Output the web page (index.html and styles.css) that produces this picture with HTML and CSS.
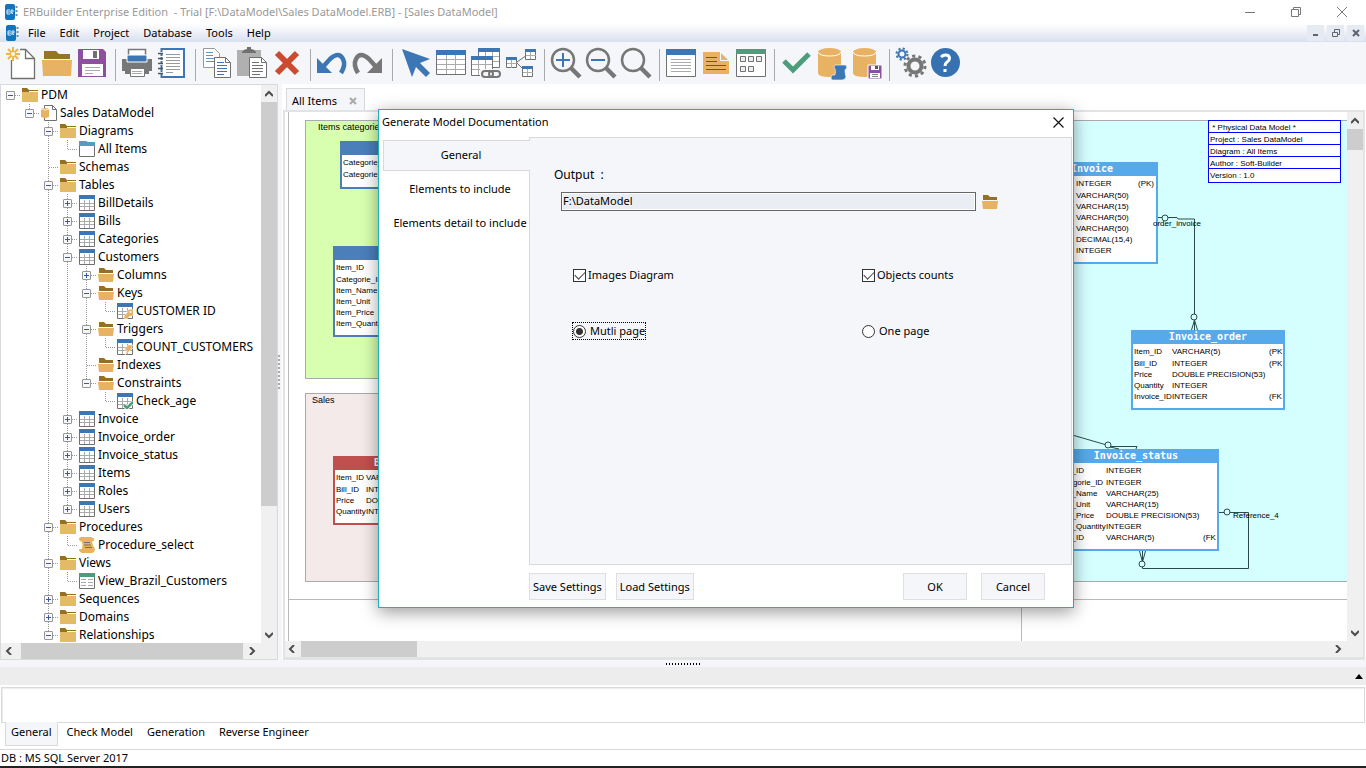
FILE: index.html
```html
<!DOCTYPE html>
<html lang="en">
<head>
<meta charset="utf-8">
<title>ERBuilder Enterprise Edition</title>
<link rel="stylesheet" href="styles.css">
</head>
<body>
<svg class="defs" aria-hidden="true">
  <symbol id="logo" viewBox="0 0 14 16"><rect x="1" y="0" width="10" height="16" rx="2" fill="#1274bc"/><path d="M3 6h3M3 8h3M3 10h3M3 6v4M7 6v4M7 6h2v2H7l2 2" stroke="#d8ecfa" fill="none"/><path d="M12.500 2v2m0 2v2m0 2v2" stroke="#5b93bd" stroke-width="2"/></symbol>
  <symbol id="folder" viewBox="0 0 16 14"><path d="M0 0h5l2 2h9v2H0z" fill="#957023"/><path d="M0 4h16v10H0z" fill="#e3ba66"/><path d="M7 3h9v1H7z" fill="#fff"/></symbol>
  <symbol id="openfolder" viewBox="0 0 16 14"><path d="M1 0h5l2 2h7v3H1z" fill="#957023"/><path d="M0 6h16l-1 8H1z" fill="#e8b264"/></symbol>
  <symbol id="grid" viewBox="0 0 16 16"><path d="M.5 4v11.500h15V4" fill="#fff" stroke="#707070"/><path d="M5.500 5v10M10.500 5v10M1 8.500h14M1 11.500h14" stroke="#aaa"/><path d="M0 0h16v4H0z" fill="#3d76b4"/></symbol>
  <symbol id="gridkey" viewBox="0 0 16 16"><use href="#grid"/><path d="M7 16v-3l3-3a4 3.500 0 1 1 3 3l-3 3z" fill="#e8b264" stroke="#fff" stroke-width=".5"/><circle cx="13.500" cy="9" r="1" fill="#fff"/></symbol>
  <symbol id="gridbolt" viewBox="0 0 16 16"><use href="#grid"/><path d="M11 6h5l-2 3h2l-8 7 2-5H7z" fill="#e8b264" stroke="#fff" stroke-width=".5"/></symbol>
  <symbol id="gridcheck" viewBox="0 0 16 16"><use href="#grid"/><path d="m7 12 3 3 6-6" fill="none" stroke="#fff" stroke-width="4"/><path d="m7 12 3 3 6-6" fill="none" stroke="#4b9d7c" stroke-width="2.500"/></symbol>
  <symbol id="model" viewBox="0 0 16 16"><path d="M3.500.5h8l4 4v11h-12z" fill="#fff" stroke="#707070"/><path d="M11.500.5v4h4" fill="none" stroke="#707070"/><path d="M0 4q4-2 8 0v8q-4 2-8 0z" fill="#e8b264"/><path d="M0 4q4 2 8 0" fill="none" stroke="#fff" stroke-width=".7"/></symbol>
  <symbol id="diagram" viewBox="0 0 16 16"><path d="M.5 3.500h15v12H.5z" fill="#fff" stroke="#707070"/><path d="M0 0h7l2 1h7v4H0z" fill="#4d9fc4"/></symbol>
  <symbol id="script" viewBox="0 0 16 16"><path d="M2 0h10q4 1 3 4h-2q0 4 3 8 0 4-4 4H3q-3-1-3-4h3Q4 8 3 5L0 3q0-3 2-3z" fill="#e8b264"/><path d="M5 5.500h6M5 8h7M6 10.500h7" stroke="#707070"/></symbol>
  <symbol id="view" viewBox="0 0 16 16"><path d="M.5 4v11.500h15V4" fill="#fff" stroke="#707070"/><path d="M2 6.500h5m2 0h5M2 9.500h5m2 0h5M2 12.500h5m2 0h5" stroke="#aaa"/><path d="M0 0h16v4H0z" fill="#4b9d7c"/></symbol>
  <symbol id="chev" viewBox="0 0 8 8"><path d="M6 0 2 4l4 4" fill="none" stroke="#4d4d4d" stroke-width="2"/></symbol>
</svg>

<header class="titlebar">
  <svg class="logo"><use href="#logo"/></svg>
  <h1>ERBuilder Enterprise Edition &nbsp;- Trial [F:\DataModel\Sales DataModel.ERB] - [Sales DataModel]</h1>
  <div class="winctl">
    <button aria-label="Minimize"><svg width="10" height="10"><path d="M0 5.500h10" stroke="#777"/></svg></button>
    <button aria-label="Restore"><svg width="10" height="10"><path d="M.5 2.500h7v7h-7zM2.500 2.500v-2h7v7h-2" fill="none" stroke="#777"/></svg></button>
    <button aria-label="Close"><svg width="10" height="10"><path d="m0 0 10 10M10 0 0 10" stroke="#777"/></svg></button>
  </div>
</header>

<nav class="menubar">
  <svg class="logo"><use href="#logo"/></svg>
  <button>File</button><button>Edit</button><button>Project</button><button>Database</button><button>Tools</button><button>Help</button>
  <div class="mdictl">
    <button aria-label="Minimize diagram"><svg width="8" height="8"><path d="M1 6h5" stroke="#5f6570" stroke-width="2"/></svg></button>
    <button aria-label="Restore diagram"><svg width="8" height="8"><path d="M.5 3.500h5v4h-5zM2.500 3V.500h5v5H6" fill="none" stroke="#5f6570"/></svg></button>
    <button aria-label="Close diagram"><svg width="8" height="8"><path d="m1 1 6 6M7 1 1 7" stroke="#5f6570" stroke-width="2"/></svg></button>
  </div>
</nav>

<div class="toolbar" role="toolbar">
  <div class="group">
    <button aria-label="New"><svg viewBox="4 46 35 34"><path d="M11.500 49.500h14l9 9v20h-23z" fill="#fff" stroke="#707070" stroke-width="1.300"/><path d="M25.500 49.500v9h9" fill="none" stroke="#707070" stroke-width="1.300"/><path d="M6 47h14v13H6z" fill="#f4f6f9"/><path d="M13 47v14M6 54h14M8 49l10 10M18 49 8 59" stroke="#f0b544" stroke-width="2"/><circle cx="13" cy="54" r="2" fill="#f4f6f9"/></svg></button>
    <button aria-label="Open"><svg viewBox="39 46 35 34"><path d="M44 51h12l3 3h11v5H44z" fill="#957529"/><path d="M42 60h30l-1 16H43z" fill="#e8b264"/></svg></button>
    <button aria-label="Save"><svg viewBox="74 46 35 34"><path d="M78 49h25l3 3v25H78z" fill="#8c509f"/><path d="M83 50h16v9H83zM82 64h21v12H82z" fill="#fff"/><path d="M93 51h4v7h-4z" fill="#707070"/><path d="M85 67.500h15M85 70.500h15M85 73.500h8" stroke="#aaa"/></svg></button>
  </div>
  <div class="group">
    <button aria-label="Print"><svg viewBox="120 46 35 34"><path d="M122 59h30v12h-3v3h-24v-3h-3z" fill="#777"/><path d="M128.500 49.500h17v8h-17z" fill="#fff" stroke="#777" stroke-width="1.500"/><path d="M127 55h20v7h-20z" fill="#3d76b4" stroke="#fff"/><path d="M130.500 68.500h14v8h-14z" fill="#fff" stroke="#777"/><path d="M132 71.500h10M132 73.500h10" stroke="#aaa"/></svg></button>
    <button aria-label="Documentation"><svg viewBox="155 46 35 34"><rect x="161.500" y="49" width="22.500" height="28" fill="#fff" stroke="#3d76b4" stroke-width="2"/><path d="M161 52v24" stroke="#fff" stroke-width="4" stroke-dasharray="1 3"/><path d="M158 53.500h5m-5 5h5m-5 5h5m-5 5h5m-5 5h5" stroke="#555" stroke-width="1.500"/><path d="M166 54.500h14m-14 3h14m-14 3h14m-14 3h14m-14 3h14m-14 3h14m-14 3h7" stroke="#999"/></svg></button>
  </div>
  <div class="group">
    <button aria-label="Copy"><svg viewBox="200 46 35 34"><path d="M203.500 48.500h11l5 5v14h-16z" fill="#fff" stroke="#999"/><path d="M206 52.500h7m-7 3h7m-7 3h10m-10 3h10" stroke="#5b93cb"/><path d="M214.500 57.500h11l5 5v15h-16z" fill="#fff" stroke="#707070"/><path d="M225.500 57.500v5h5" fill="none" stroke="#707070"/><path d="M217 62.500h7m-7 3h10m-10 3h10m-10 3h10m-10 3h7" stroke="#3d76b4"/></svg></button>
    <button aria-label="Paste"><svg viewBox="235 46 35 34"><path d="M237 50h24v26h-24z" fill="#b0b0b0"/><path d="M242 52q2-3 5-3v-2h4v2q3 0 5 3v1h-14z" fill="#707070"/><path d="M249.500 57.500h12l5 5v15h-17z" fill="#fff" stroke="#707070"/><path d="M261.500 57.500v5h5" fill="none" stroke="#707070"/><path d="M252 62.500h7m-7 3h11m-11 3h11m-11 3h11m-11 3h8" stroke="#707070"/></svg></button>
    <button aria-label="Delete"><svg viewBox="270 46 35 34"><path d="m277 53 20 20M297 53l-20 20" stroke="#cc4a30" stroke-width="6"/></svg></button>
  </div>
  <div class="group group-wide">
    <button aria-label="Undo"><svg viewBox="315 46 35 34"><path d="M321 69 330 59q9-8 13 0 3 6-2 14" fill="none" stroke="#3d76b4" stroke-width="4.500"/><path d="M317 58v15h15z" fill="#3d76b4"/></svg></button>
    <button aria-label="Redo"><svg viewBox="350 46 35 34"><path d="M378 69 369 59q-9-8-13 0-3 6 2 14" fill="none" stroke="#777" stroke-width="4.500"/><path d="M382 58v15h-15z" fill="#777"/></svg></button>
  </div>
  <div class="group">
    <button aria-label="Select"><svg viewBox="399 46 35 34"><path d="m402 49 28 10-10 4 10 10-4 4-10-10-4 10z" fill="#3d76b4"/></svg></button>
    <button aria-label="Table"><svg viewBox="434 46 35 34"><path d="M436.500 51.500h29v23h-29z" fill="#fff" stroke="#707070"/><path d="M446.500 55v19m9-19v19M437 59.500h28m-28 5h28m-28 5h28" stroke="#aaa"/><path d="M436 50h30v5h-30z" fill="#3d76b4"/></svg></button>
    <button aria-label="Linked tables"><svg viewBox="469 46 35 34"><path d="M478.500 49.500h21v18h-21z" fill="#fff" stroke="#707070"/><path d="M485.500 52v15m7-15v15M479 56.500h20m-20 5h20" stroke="#aaa"/><path d="M478 48h22v4h-22z" fill="#3d76b4"/><path d="M471.500 57.500h21v18h-21z" fill="#fff" stroke="#707070"/><path d="M478.500 60v15m7-15v15M472 64.500h20m-20 5h20" stroke="#aaa"/><path d="M471 56h22v4h-22z" fill="#3d76b4"/><path d="M480 69h22v10h-22z" fill="#f4f6f9"/><rect x="482" y="71" width="11" height="6" rx="3" fill="none" stroke="#777" stroke-width="2"/><rect x="489" y="71" width="11" height="6" rx="3" fill="none" stroke="#777" stroke-width="2"/></svg></button>
    <button aria-label="Relationship"><svg viewBox="504 46 35 34"><path d="m517 62 10-7M517 63l6 6" stroke="#707070"/><g fill="#fff" stroke="#707070"><path d="M506.500 58.500h10v9h-10zM525.500 50.500h10v9h-10zM522.500 67.500h10v9h-10z"/></g><path d="M511.500 60v8M507 63.500h10M530.500 51v8M526 55.500h10M527.500 68v8M523 72.500h10" stroke="#aaa"/><path d="M506 57h11v3h-11zM525 49h11v3h-11zM522 66h11v3h-11z" fill="#3d76b4"/></svg></button>
  </div>
  <div class="group">
    <button aria-label="Zoom in"><svg viewBox="549 46 35 34"><path d="m571 68 9 9" stroke="#777" stroke-width="4.500"/><circle cx="563" cy="60" r="11" fill="none" stroke="#777" stroke-width="2.500"/><path d="M556 60h14M563 53v14" stroke="#3d76b4" stroke-width="2"/></svg></button>
    <button aria-label="Zoom out"><svg viewBox="584 46 35 34"><path d="m606 68 9 9" stroke="#777" stroke-width="4.500"/><circle cx="598" cy="60" r="11" fill="none" stroke="#777" stroke-width="2.500"/><path d="M591 60h14" stroke="#3d76b4" stroke-width="2"/></svg></button>
    <button aria-label="Zoom"><svg viewBox="619 46 35 34"><path d="m641 68 9 9" stroke="#777" stroke-width="4.500"/><circle cx="633" cy="60" r="11" fill="none" stroke="#777" stroke-width="2.500"/></svg></button>
  </div>
  <div class="group">
    <button aria-label="Note"><svg viewBox="664 46 35 34"><path d="M666.500 50.500h29v26h-29z" fill="#fff" stroke="#707070"/><path d="M666 49h30v6h-30z" fill="#3d76b4"/><path d="M671 59.500h20m-20 3h20m-20 3h20m-20 3h20m-20 3h20" stroke="#aaa"/></svg></button>
    <button aria-label="Text"><svg viewBox="699 46 35 34"><path d="M703 52h17l9 9v13h-26z" fill="#e8b264"/><path d="M720.500 52v8.500h9" fill="none" stroke="#fff"/><path d="M706 57.500h11m-11 4h11m-11 4h20m-20 4h20" stroke="#5f5a50"/></svg></button>
    <button aria-label="Calendar"><svg viewBox="734 46 35 34"><path d="M736.500 50.500h29v26h-29z" fill="#fff" stroke="#707070"/><path d="M736 49h30v5h-30z" fill="#4b9d7c"/><path d="M740.500 56.500h5v5h-5zM748.500 56.500h5v5h-5zM756.500 56.500h5v5h-5zM740.500 66.500h5v5h-5zM748.500 66.500h5v5h-5z" fill="#eee" stroke="#707070"/></svg></button>
  </div>
  <div class="group">
    <button aria-label="Check model"><svg viewBox="779 46 35 34"><path d="m784 61 9 9 16-16" fill="none" stroke="#4b9d7c" stroke-width="5"/></svg></button>
    <button aria-label="Generate script"><svg viewBox="814 46 35 34"><path d="M818 51v22q0 4 12 4 11 0 11-4V51z" fill="#e8b264"/><ellipse cx="829.500" cy="52" rx="11.500" ry="4" fill="#e8b264"/><path d="M818 52q1 4 11.500 4T841 52" fill="none" stroke="#fff"/><path d="M835 65h11q2 3-1 5 0 4 1 7-1 3-4 3h-10q-2-2 0-5h3q1-4 0-6-2-2 0-4z" fill="#3d76b4" stroke="#fff" stroke-width=".6"/></svg></button>
    <button aria-label="Save database"><svg viewBox="849 46 35 34"><path d="M853 51v22q0 4 12 4 11 0 11-4V51z" fill="#e8b264"/><ellipse cx="864.500" cy="52" rx="11.500" ry="4" fill="#e8b264"/><path d="M853 52q1 4 11.500 4T876 52" fill="none" stroke="#fff"/><path d="M868 65h14v14h-14z" fill="#8c509f" stroke="#fff"/><path d="M871 66h8v4h-8zM870 73h10v5h-10z" fill="#fff"/><path d="M875 66h3v3h-3z" fill="#555"/><path d="M872 74.500h6m-6 2h6" stroke="#888"/></svg></button>
  </div>
  <div class="group">
    <button aria-label="Settings"><svg viewBox="894 46 35 34"><circle cx="902" cy="54" r="3.500" fill="none" stroke="#3d76b4" stroke-width="2"/><circle cx="902" cy="54" r="5.500" fill="none" stroke="#3d76b4" stroke-width="2" stroke-dasharray="2.160 2.160"/><circle cx="915" cy="66" r="6.500" fill="none" stroke="#777" stroke-width="4"/><circle cx="915" cy="66" r="10" fill="none" stroke="#777" stroke-width="3" stroke-dasharray="3.140 3.140"/></svg></button>
    <button aria-label="Help"><svg viewBox="929 46 35 34"><circle cx="945.500" cy="62.500" r="14.500" fill="#3672b2"/><path d="M941 57q2-2 4.500-2 4 0 4 3.500 0 2-2.500 3.500-2 1.500-2 4" fill="none" stroke="#fff" stroke-width="3"/><path d="M943.500 69h3v3h-3z" fill="#fff"/></svg></button>
  </div>
</div>

<main class="workspace">
  <aside class="explorer">
    <div class="explorer-main">
      <ul class="tree">
        <li><div class="row"><i class="exp"></i><svg><use href="#folder"/></svg>PDM</div><ul>
          <li><div class="row"><i class="exp"></i><svg><use href="#model"/></svg>Sales DataModel</div><ul>
            <li><div class="row"><i class="exp"></i><svg><use href="#folder"/></svg>Diagrams</div><ul>
              <li><div class="row"><svg><use href="#diagram"/></svg>All Items</div></li></ul></li>
            <li><div class="row"><svg><use href="#folder"/></svg>Schemas</div></li>
            <li><div class="row"><i class="exp"></i><svg><use href="#folder"/></svg>Tables</div><ul>
              <li><div class="row"><i class="exp plus"></i><svg><use href="#grid"/></svg>BillDetails</div></li>
              <li><div class="row"><i class="exp plus"></i><svg><use href="#grid"/></svg>Bills</div></li>
              <li><div class="row"><i class="exp plus"></i><svg><use href="#grid"/></svg>Categories</div></li>
              <li><div class="row"><i class="exp"></i><svg><use href="#grid"/></svg>Customers</div><ul>
                <li><div class="row"><i class="exp plus"></i><svg><use href="#openfolder"/></svg>Columns</div></li>
                <li><div class="row"><i class="exp"></i><svg><use href="#openfolder"/></svg>Keys</div><ul>
                  <li><div class="row"><svg><use href="#gridkey"/></svg>CUSTOMER ID</div></li></ul></li>
                <li><div class="row"><i class="exp"></i><svg><use href="#openfolder"/></svg>Triggers</div><ul>
                  <li><div class="row"><svg><use href="#gridbolt"/></svg>COUNT_CUSTOMERS</div></li></ul></li>
                <li><div class="row"><svg><use href="#openfolder"/></svg>Indexes</div></li>
                <li><div class="row"><i class="exp"></i><svg><use href="#openfolder"/></svg>Constraints</div><ul>
                  <li><div class="row"><svg><use href="#gridcheck"/></svg>Check_age</div></li></ul></li></ul></li>
              <li><div class="row"><i class="exp plus"></i><svg><use href="#grid"/></svg>Invoice</div></li>
              <li><div class="row"><i class="exp plus"></i><svg><use href="#grid"/></svg>Invoice_order</div></li>
              <li><div class="row"><i class="exp plus"></i><svg><use href="#grid"/></svg>Invoice_status</div></li>
              <li><div class="row"><i class="exp plus"></i><svg><use href="#grid"/></svg>Items</div></li>
              <li><div class="row"><i class="exp plus"></i><svg><use href="#grid"/></svg>Roles</div></li>
              <li><div class="row"><i class="exp plus"></i><svg><use href="#grid"/></svg>Users</div></li></ul></li>
            <li><div class="row"><i class="exp"></i><svg><use href="#folder"/></svg>Procedures</div><ul>
              <li><div class="row"><svg><use href="#script"/></svg>Procedure_select</div></li></ul></li>
            <li><div class="row"><i class="exp"></i><svg><use href="#folder"/></svg>Views</div><ul>
              <li><div class="row"><svg><use href="#view"/></svg>View_Brazil_Customers</div></li></ul></li>
            <li><div class="row"><i class="exp plus"></i><svg><use href="#folder"/></svg>Sequences</div></li>
            <li><div class="row"><i class="exp plus"></i><svg><use href="#folder"/></svg>Domains</div></li>
            <li><div class="row"><i class="exp"></i><svg><use href="#folder"/></svg>Relationships</div></li></ul></li></ul></li>
      </ul>
      <div class="vbar"><svg class="chev up"><use href="#chev"/></svg><div class="track"><div class="thumb tree-v"></div></div><svg class="chev down"><use href="#chev"/></svg></div>
    </div>
    <div class="hbar hbar-tree"><svg class="chev"><use href="#chev"/></svg><div class="track"><div class="thumb full"></div></div><svg class="chev right"><use href="#chev"/></svg></div>
  </aside>
  <div class="vsplit"><i></i></div>

  <section class="editor">
    <div class="doctabs"><div class="doctab"><button>All Items</button><button aria-label="Close tab"><svg width="8" height="8"><path d="m1 1 6 6M7 1 1 7" stroke="#aaa" stroke-width="2"/></svg></button></div></div>
    <div class="frame">
      <div class="frame-main">
        <div class="canvas">
          <div class="pageline pl-left"></div><div class="pageline pl-bottom"></div><div class="pageline pl-mid"></div>
          <div class="zone z-green"><span>Items categories</span></div>
          <div class="zone z-pink"><span>Sales</span></div>
          <div class="zone z-cyan"></div>

          <table class="node blue n-cat"><caption>Categories</caption><tbody><tr><td>Categorie_ID</td><td>INTEGER</td></tr><tr><td>Categorie_Name</td><td>VARCHAR(25)</td></tr></tbody></table>
          <table class="node blue pk n-items"><caption>Items</caption><tbody><tr><td>Item_ID</td><td>INTEGER</td></tr><tr><td>Categorie_ID</td><td>INTEGER</td></tr><tr><td>Item_Name</td><td>VARCHAR(25)</td></tr><tr><td>Item_Unit</td><td>VARCHAR(15)</td></tr><tr><td>Item_Price</td><td>DOUBLE</td></tr><tr><td>Item_Quantity</td><td>INTEGER</td></tr></tbody></table>
          <table class="node red pk n-bill"><caption>BillDetails</caption><tbody><tr><td>Item_ID</td><td>VARCHAR(5)</td></tr><tr><td>Bill_ID</td><td>INTEGER</td></tr><tr><td>Price</td><td>DOUBLE PRECISION</td></tr><tr><td>Quantity</td><td>INTEGER</td></tr></tbody></table>
          <table class="node sky pk n-inv"><caption>Invoice</caption><tbody><tr><td>Invoice_ID</td><td>INTEGER</td><td>(PK)</td></tr><tr><td>Name</td><td>VARCHAR(50)</td></tr><tr><td>Phone</td><td>VARCHAR(15)</td></tr><tr><td>Address</td><td>VARCHAR(50)</td></tr><tr><td>City</td><td>VARCHAR(50)</td></tr><tr><td>Total</td><td>DECIMAL(15,4)</td></tr><tr><td>Status</td><td>INTEGER</td></tr></tbody></table>
          <table class="node sky pk n-order"><caption>Invoice_order</caption><tbody><tr><td>Item_ID</td><td>VARCHAR(5)</td><td>(PK</td></tr><tr><td>Bill_ID</td><td>INTEGER</td><td>(PK</td></tr><tr><td>Price</td><td>DOUBLE PRECISION(53)</td></tr><tr><td>Quantity</td><td>INTEGER</td></tr><tr><td>Invoice_ID</td><td>INTEGER</td><td>(FK</td></tr></tbody></table>
          <table class="node sky pk n-status"><caption>Invoice_status</caption><tbody><tr><td>Item_ID</td><td>INTEGER</td><td></td></tr><tr><td>Categorie_ID</td><td>INTEGER</td></tr><tr><td>Item_Name</td><td>VARCHAR(25)</td></tr><tr><td>Item_Unit</td><td>VARCHAR(15)</td></tr><tr><td>Item_Price</td><td>DOUBLE PRECISION(53)</td></tr><tr><td>Item_Quantity</td><td>INTEGER</td></tr><tr><td>Item_ID</td><td>VARCHAR(5)</td><td>(FK</td></tr></tbody></table>

          <svg class="links" viewBox="285 112 1061 528">
            <g fill="none" stroke="#2b4a4c">
              <path d="M1158 217.500h19l1 1.500h16.500v111M1191.500 330l3-10 3 10M1194.500 320v10"/>
              <path d="M1074 435.500l31 9M1110 446.500h27M1137 446l-1 3M1110 447l9 2"/>
              <path d="M1219 512.500h29.500v56H1142.500v-17M1139.500 551l3 11 3-11"/>
              <path d="M1142.500 551v12"/>
            </g>
            <g fill="#d5ffff" stroke="#2b4a4c"><circle cx="1165" cy="218" r="3"/><circle cx="1194" cy="317" r="3"/><circle cx="1108" cy="445" r="3"/><circle cx="1227" cy="512" r="3"/><circle cx="1142" cy="564" r="3"/></g>
          </svg>
          <span class="rel r-inv">order_invoice</span>
          <span class="rel r-ref">Reference_4</span>
          <div class="legend"><div>&nbsp;* Physical Data Model *</div><div>Project : Sales DataModel</div><div>Diagram : All Items</div><div>Author : Soft-Builder</div><div>Version : 1.0</div></div>
        </div>
        <div class="vbar"><svg class="chev up"><use href="#chev"/></svg><div class="track"><div class="thumb doc-v"></div></div><svg class="chev down"><use href="#chev"/></svg></div>
      </div>
      <div class="hbar hbar-doc"><svg class="chev"><use href="#chev"/></svg><div class="track"><div class="thumb doc-h"></div></div><svg class="chev right"><use href="#chev"/></svg></div>
    </div>
  </section>
</main>

<div class="hsplit"><i></i></div>
<section class="output">
  <div class="output-head"><button aria-label="Expand"><svg width="8" height="5"><path d="M4 0l4 5H0z"/></svg></button></div>
  <div class="output-body"></div>
  <div class="output-tabs"><button class="active">General</button><button>Check Model</button><button>Generation</button><button>Reverse Engineer</button></div>
</section>
<footer class="status">DB : MS SQL Server 2017</footer>

<div class="dialog" role="dialog" aria-labelledby="dlg-title">
  <div class="dlg-head"><h2 id="dlg-title">Generate Model Documentation</h2><button aria-label="Close dialog"><svg width="11" height="11"><path d="m.5.5 10 10M10.500.5l-10 10" stroke="#111" stroke-width="1.200"/></svg></button></div>
  <div class="dlg-body">
    <div class="side"><button class="active">General</button><button>Elements to include</button><button>Elements detail to include</button></div>
    <form class="pane">
      <label class="outlabel" for="out">Output &nbsp;:</label>
      <div class="path"><input id="out" type="text" value="F:\DataModel"><button type="button" aria-label="Browse"><svg width="16" height="14"><use href="#openfolder"/></svg></button></div>
      <div class="options">
        <div><label><input type="checkbox" checked>Images Diagram</label></div>
        <div><label><input type="checkbox" checked>Objects counts</label></div>
        <div><label class="focus"><input type="radio" name="pages" checked>Mutli page</label></div>
        <div><label class="rlabel"><input type="radio" name="pages">One page</label></div>
      </div>
    </form>
  </div>
  <div class="dlg-foot"><button>Save Settings</button><button>Load Settings</button><span></span><button>OK</button><button>Cancel</button></div>
</div>
</body>
</html>
```
FILE: styles.css
```css
* { box-sizing: border-box; }
body {
  margin: 0;
  height: 100vh;
  display: flex;
  flex-direction: column;
  overflow: hidden;
  position: relative;
  background: #fff;
  color: #000;
  font: 11px/16px "Noto Sans", "Open Sans", sans-serif;
}
button { font: inherit; color: inherit; background: none; border: 0; padding: 0; margin: 0; display: flex; align-items: center; justify-content: center; }
h1, h2 { margin: 0; font: inherit; }
.defs { position: absolute; width: 0; height: 0; }
svg { display: block; flex: none; }

.titlebar { height: 24px; flex: none; display: flex; align-items: center; gap: 5px; padding-left: 4px; color: #999; }
.titlebar h1 { flex: 1; white-space: nowrap; }
.logo { width: 14px; height: 16px; }
.winctl { display: flex; margin-right: 1px; }
.winctl button { width: 46px; height: 20px; }

.menubar { height: 18px; flex: none; display: flex; align-items: center; gap: 14px; padding-left: 5px; background: linear-gradient(#fff, #d9dfef); }
.menubar .logo { margin-right: -5px; }
.mdictl { margin-left: auto; display: flex; gap: 3px; padding-right: 2px; }
.mdictl button { width: 17px; height: 16px; background: #e6eaf3; }

.toolbar { height: 42px; flex: none; display: flex; align-items: center; padding-left: 4px; background: #f4f6f9; }
.group { display: flex; position: relative; padding-right: 11px; }
.group + .group { padding-right: 10px; }
.group.group-wide { padding-right: 14px; }
.group:not(:last-child)::after { content: ""; position: absolute; right: 4px; top: 3px; height: 32px; border-right: 1px solid #aaa; }
.group.group-wide::after { right: 6px; }
.toolbar svg { width: 35px; height: 34px; }

.workspace { flex: 1; min-height: 0; display: flex; background: #f4f6f9; }
.explorer { width: 278px; flex: none; display: flex; flex-direction: column; background: #fff; border: 1px solid #d9d9db; }
.explorer-main { flex: 1; min-height: 0; display: flex; }
.tree { flex: 1; overflow: hidden; font-size: 12px; }
ul { list-style: none; margin: 0; padding: 0; }
.tree { padding-top: 1px; }
.tree ul { padding-left: 19px; }
.tree li { position: relative; }
.tree ul > li::before {
  content: ""; position: absolute; left: 9px; top: 0; bottom: 0; width: 1px;
  background: repeating-linear-gradient(#999 0 1px, transparent 1px 2px);
}
.tree ul > li:last-child::before { bottom: auto; height: 10px; }
.row { height: 18px; display: flex; align-items: center; padding-left: 21px; position: relative; white-space: nowrap; gap: 3px; }
.row::before {
  content: ""; position: absolute; left: 10px; top: 9px; width: 10px; height: 1px;
  background: repeating-linear-gradient(90deg, #999 0 1px, transparent 1px 2px);
}
.row svg { width: 16px; height: 16px; }
.exp { position: absolute; left: 5px; top: 5px; width: 9px; height: 9px; border: 1px solid #969696; border-radius: 1px; background: linear-gradient(#3c57a5, #3c57a5) center / 5px 1px no-repeat, #f8f8f8; }
.exp.plus { background: linear-gradient(#3c57a5, #3c57a5) center / 5px 1px no-repeat, linear-gradient(#3c57a5, #3c57a5) center / 1px 5px no-repeat, #f8f8f8; }

.vbar { width: 16px; flex: none; display: flex; flex-direction: column; align-items: center; background: #f0f0f0; padding: 5px 0 4px; }
.hbar { height: 16px; flex: none; display: flex; align-items: center; background: #f0f0f0; }
.track { flex: 1; align-self: stretch; }
.vbar .track { margin: 4px 0; }
.hbar .track { margin: 0 8px; }
.hbar-tree { padding: 0 21px 0 4px; }
.hbar-tree .track { margin-right: 5px; }
.hbar-doc { padding: 0 21px 0 3px; }
.hbar-doc .track { margin-left: 5px; }
.thumb { background: #cdcdcd; height: 100%; }
.thumb.tree-v { height: 77%; }
.thumb.doc-v { height: 21px; }
.thumb.doc-h { width: 116px; }
.chev { width: 8px; height: 8px; }
.up { transform: rotate(90deg); }
.down { transform: rotate(-90deg); }
.right { transform: rotate(180deg); }

.vsplit { width: 4px; flex: none; display: flex; align-items: center; }
.vsplit i { width: 2px; height: 34px; background: repeating-linear-gradient(#aaa 0 2px, transparent 2px 4px); }

.editor { flex: 1; min-width: 0; display: flex; flex-direction: column; background: #fff; }
.doctabs { height: 26px; flex: none; display: flex; padding: 4px 0 0 4px; }
.doctab { display: flex; align-items: center; gap: 12px; padding: 2px 7px 0 5px; background: #f4f6f9; border: 1px solid #d9d9db; border-bottom: 0; }
.frame { flex: 1; min-height: 0; display: flex; flex-direction: column; border: 2px solid #e2e3e5; border-width: 2px 2px 3px; margin: 0 1px; }
.frame-main { flex: 1; min-height: 0; display: flex; }
.canvas { flex: 1; position: relative; overflow: hidden; font: 8px/11px "Liberation Sans", Arial, sans-serif; }
.pageline { position: absolute; background: #b9b9b9; }
.pl-left { left: 3px; top: 0; bottom: 0; width: 1px; }
.pl-bottom { left: 3px; right: 0; top: 487px; height: 1px; }
.pl-mid { left: 736px; top: 487px; bottom: 0; width: 1px; }
.zone { position: absolute; border: 1px solid #aaa; padding: 1px 6px; font-size: 9px; }
.z-green { left: 20px; top: 8px; width: 400px; height: 259px; background: #d7ffaf; padding-left: 12px; }
.z-pink { left: 20px; top: 281px; width: 400px; height: 189px; background: #f4eae9; }
.z-cyan { left: 500px; right: -1px; top: 8px; height: 462px; background: #d5ffff; }

.node { position: absolute; border: 2px solid; border-top: 0; background: #fff; border-spacing: 0; table-layout: fixed; border-collapse: separate; padding: 2px 0 6px; }
.node caption { height: 14px; color: #fff; font: bold 10px/14px "DejaVu Sans Mono", monospace; }
.node td { padding: 0 0 0 1px; height: 11px; line-height: 11px; color: #000; white-space: nowrap; vertical-align: top; }
.node.pk tr:first-child td { height: 12px; }
.node td:nth-child(3) { width: 15px; }
.blue { border-color: #4a7fb9; }
.blue caption { background: #4a7fb9; }
.red { border-color: #c0504d; }
.red caption { background: #c0504d; }
.sky { border-color: #56a9eb; }
.sky caption { background: #56a9eb; }
.n-cat { left: 55px; top: 29px; width: 140px; height: 34px; }
.n-items { left: 48px; top: 134px; width: 148px; }
.n-bill { left: 48px; top: 344px; width: 148px; }
.n-inv { left: 741px; top: 50px; width: 132px; }
.n-order { left: 846px; top: 218px; width: 154px; }
.n-status { left: 768px; top: 337px; width: 166px; }
.n-cat td:first-child, .n-items td:first-child { width: 60px; }
.n-bill td:first-child { width: 30px; }
.n-inv td:first-child { width: 47px; }
.node.n-inv td:nth-child(3) { width: 19px; }
.n-order td:first-child { width: 38px; }
.n-status td:first-child { width: 50px; }
.links { position: absolute; left: 0; top: 0; width: 1061px; height: 528px; }
.rel { position: absolute; }
.r-inv { left: 868px; top: 106px; }
.r-ref { left: 948px; top: 398px; }
.legend { position: absolute; left: 923px; top: 8px; width: 133px; background: #fff; border: 1px solid #00f; }
.legend div { height: 12px; padding-left: 1px; line-height: 13px; border-bottom: 1px solid #00f; }
.legend div:last-child { height: 13px; border-bottom: 0; }

.hsplit { height: 7px; flex: none; display: flex; justify-content: center; align-items: center; background: #f4f6f9; }
.hsplit i { width: 34px; height: 2px; background: repeating-linear-gradient(90deg, #000 0 1px, transparent 1px 3px); }
.output { flex: none; }
.output-head { height: 18px; background: #ededed; display: flex; justify-content: flex-end; align-items: center; padding-right: 3px; }
.output-body { height: 36px; margin: 2px 1px 0; border: 1px solid #d9d9db; box-shadow: inset 1px 1px #eee; }
.output-tabs { display: flex; gap: 14px; padding-left: 5px; height: 26px; align-items: flex-start; }
.output-tabs button { height: 18px; }
.output-tabs .active { background: #f4f6f9; border: 1px solid #d9d9db; border-top: 0; height: 24px; padding: 0 5px 4px; margin: -1px -5px 0 0; }
.status { flex: none; height: 19px; border-top: 1px solid #d9d9db; border-bottom: 2px solid #222; padding-left: 1px; }

.dialog { position: absolute; left: 378px; top: 109px; width: 696px; height: 499px; background: #fff; border: 1px solid #1fafbd; box-shadow: 0 4px 16px rgba(0,0,0,.4); display: flex; flex-direction: column; }
.dlg-head { height: 27px; flex: none; display: flex; justify-content: space-between; align-items: center; padding: 0 9px 3px 3px; }
.dlg-body { flex: 1; min-height: 0; display: flex; padding: 0 1px 0 4px; }
.side { width: 146px; flex: none; padding-top: 3px; display: flex; flex-direction: column; gap: 3px; }
.side button { height: 31px; padding: 0 0 2px 8px; white-space: nowrap; }
.side .active { background: #f4f6f9; border: 1px solid #d9d9db; border-right: 0; margin-right: -1px; position: relative; }
.pane { flex: 1; background: #f4f6f9; border: 1px solid #d9d9db; padding: 28px 73px 0 24px; }
.outlabel { display: block; font-size: 12px; line-height: 18px; }
.path { display: flex; align-items: center; gap: 6px; margin: 8px 0 0 7px; }
.path input { flex: 1; height: 19px; border: 1px solid #666; background: #ebedf4; box-shadow: inset 0 0 0 1px #fff; padding: 0 1px 2px; font: inherit; color: #000; outline: 0; border-radius: 0; min-width: 0; }
.options { display: grid; grid-template-columns: 289px 1fr; row-gap: 38px; margin: 55px 0 0 19px; }
.options > div { height: 18px; display: flex; align-items: center; }
.options label { display: inline-flex; align-items: center; gap: 2px; }
.options .rlabel, .options .focus { gap: 4px; }
.options .focus { outline: 1px dotted #000; }
.options input { appearance: none; margin: 0; width: 13px; height: 13px; border: 1px solid #333; background: #fff; }
.options input[type=radio] { border-radius: 50%; }
.options input[type=radio]:checked { background: radial-gradient(circle, #333 0 3px, #fff 4px); }
.options input[type=checkbox]:checked { display: grid; place-items: center; }
.options input[type=checkbox]:checked::after { content: ""; width: 9px; height: 5px; border: solid #444; border-width: 0 0 1px 1px; transform: rotate(-45deg); margin-top: -3px; }
.dlg-foot { height: 42px; flex: none; display: flex; gap: 10px; padding: 8px 28px 0 150px; }
.dlg-foot span { flex: 1; }
.dlg-foot button { min-width: 64px; height: 27px; background: #f4f6f9; border: 1px solid #dedfe2; padding: 0 3px; white-space: nowrap; }
.dlg-foot button:last-child { margin-left: 4px; }
```
